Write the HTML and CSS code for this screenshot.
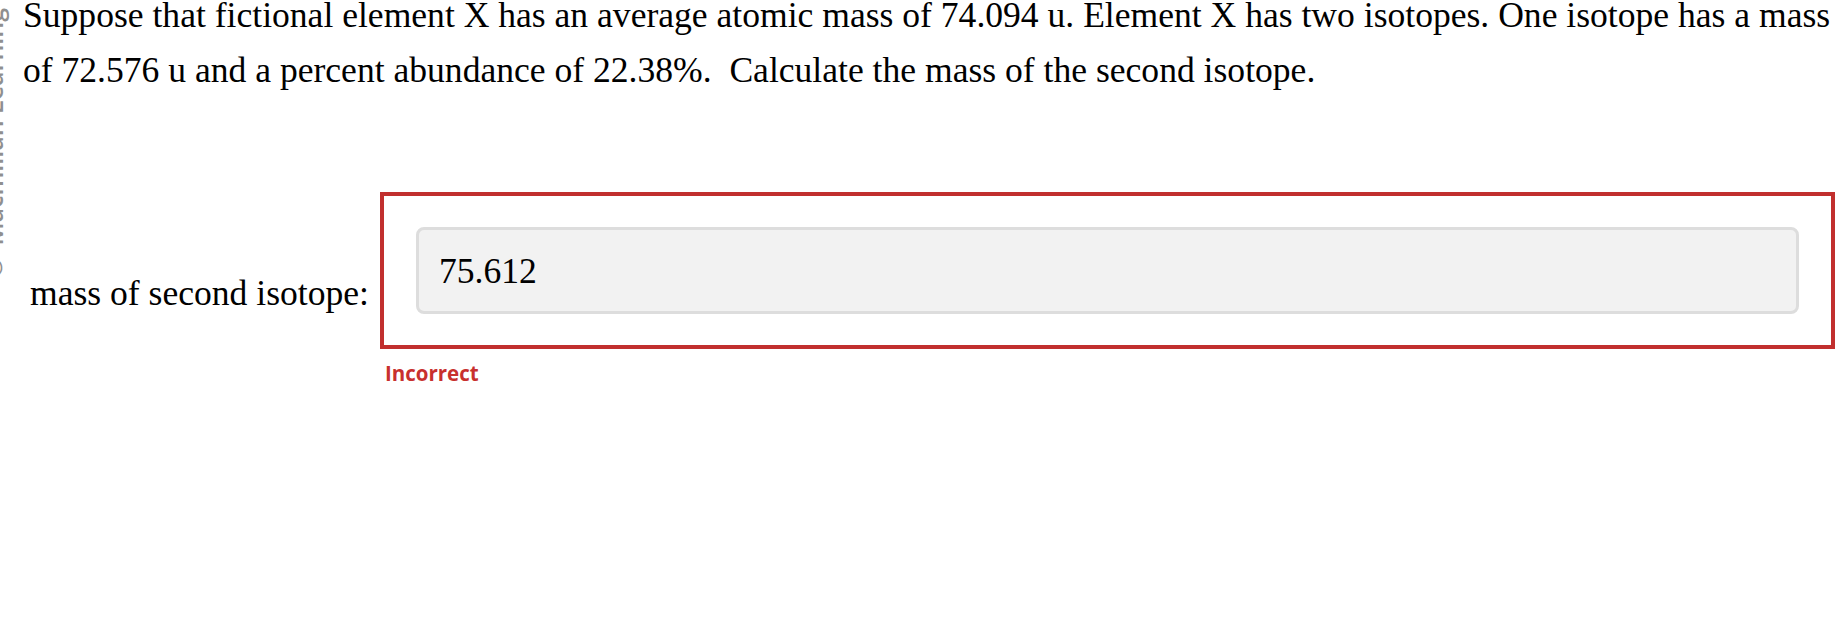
FILE: index.html
```html
<!DOCTYPE html>
<html>
<head>
<meta charset="utf-8">
<link rel="stylesheet" href="styles.css">
</head>
<body>
<div class="watermark">© Macmillan Learning</div>
<main class="page">
  <p class="question">Suppose that fictional element X has an average atomic mass of 74.094&nbsp;u. Element X has two isotopes. One isotope has a mass of 72.576&nbsp;u and a percent abundance of 22.38%.&nbsp; Calculate the mass of the second isotope.</p>
  <div class="answer-row">
    <label class="label" for="ans">mass of second isotope:</label>
    <div class="answer-col">
      <div class="answer-box">
        <input id="ans" class="answer-input" type="text" value="75.612">
      </div>
      <div class="feedback">Incorrect</div>
    </div>
  </div>
</main>
</body>
</html>
```

FILE: styles.css
```css
html, body {
  margin: 0;
  padding: 0;
  background: #ffffff;
  overflow: hidden;
}
body {
  width: 1844px;
  height: 632px;
  position: relative;
  font-family: "Liberation Serif", "Times New Roman", serif;
  color: #000;
}
.watermark {
  position: absolute;
  left: -24px;
  top: 8px;
  writing-mode: vertical-rl;
  transform: rotate(180deg);
  font-family: "Open Sans", "Liberation Sans", sans-serif;
  font-size: 25px;
  font-weight: 600;
  color: #8f8f8f;
  white-space: nowrap;
}
.page {
  padding-left: 23px;
}
.question {
  margin: -12px 0 0 0;
  width: 1821px;
  font-size: 35.6px;
  line-height: 55px;
}
.answer-row {
  display: flex;
  align-items: flex-start;
  margin-top: 94px;
  padding-left: 7px;
}
.label {
  font-size: 35.6px;
  line-height: 41px;
  margin-top: 81px;
  margin-right: 11px;
  white-space: nowrap;
}
.answer-col {
  display: flex;
  flex-direction: column;
}
.answer-box {
  box-sizing: border-box;
  width: 1455px;
  border: 4px solid #c12f2e;
  padding: 31px 32px;
}
.answer-input {
  display: block;
  box-sizing: border-box;
  width: 100%;
  height: 87px;
  margin: 0;
  border: 3px solid #dddddd;
  border-radius: 8px;
  background: #f2f2f2;
  padding: 0 20px;
  font-family: "Liberation Serif", "Times New Roman", serif;
  font-size: 35.6px;
  color: #000;
  outline: none;
}
.feedback {
  margin-top: 10px;
  padding-left: 5px;
  font-family: "Open Sans", "Liberation Sans", sans-serif;
  font-weight: 700;
  font-size: 20.5px;
  color: #c8302e;
}
```
